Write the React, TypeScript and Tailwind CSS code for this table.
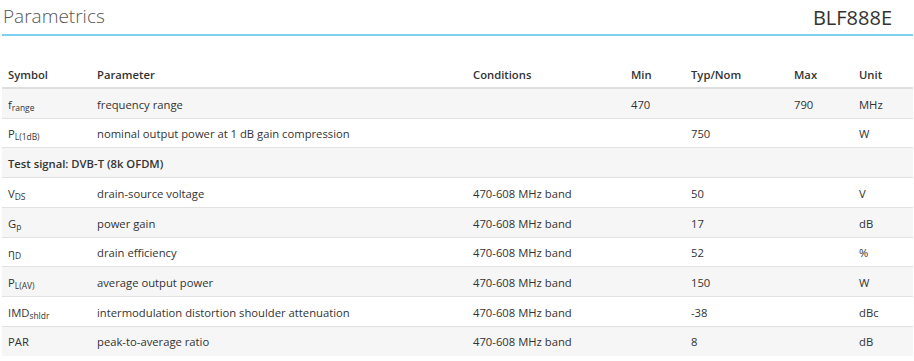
import React from "react";

type Row = {
  sym: React.ReactNode;
  param: string;
  cond?: string;
  min?: string;
  typ?: string;
  max?: string;
  unit?: string;
};

const S = ({ b, s }: { b: string; s: string }) => (
  <span>
    {b}
    <sub>{s}</sub>
  </span>
);

const rows1: Row[] = [
  { sym: <S b="f" s="range" />, param: "frequency range", min: "470", max: "790", unit: "MHz" },
  { sym: <S b="P" s="L(1dB)" />, param: "nominal output power at 1 dB gain compression", typ: "750", unit: "W" },
];

const rows2: Row[] = [
  { sym: <S b="V" s="DS" />, param: "drain-source voltage", cond: "470-608 MHz band", typ: "50", unit: "V" },
  { sym: <S b="G" s="p" />, param: "power gain", cond: "470-608 MHz band", typ: "17", unit: "dB" },
  { sym: <S b="η" s="D" />, param: "drain efficiency", cond: "470-608 MHz band", typ: "52", unit: "%" },
  { sym: <S b="P" s="L(AV)" />, param: "average output power", cond: "470-608 MHz band", typ: "150", unit: "W" },
  { sym: <S b="IMD" s="shldr" />, param: "intermodulation distortion shoulder attenuation", cond: "470-608 MHz band", typ: "-38", unit: "dBc" },
  { sym: "PAR", param: "peak-to-average ratio", cond: "470-608 MHz band", typ: "8", unit: "dB" },
];

const td = "pl-[6px] pt-[5.6px] pb-[3.15px] leading-[20px] border-t border-[#e2e2e2] whitespace-nowrap";
const th = "pl-[6px] pt-[6px] pb-[2px] leading-[20px] font-semibold text-left border-b-2 border-[#dedede]";

function DataRow({ r, gray }: { r: Row; gray: boolean }) {
  return (
    <tr className={gray ? "bg-[#f6f6f6]" : "bg-white"}>
      <td className={td}>{r.sym}</td>
      <td className={td}>{r.param}</td>
      <td className={td}>{r.cond ?? ""}</td>
      <td className={td}>{r.min ?? ""}</td>
      <td className={td}>{r.typ ?? ""}</td>
      <td className={td}>{r.max ?? ""}</td>
      <td className={td}>{r.unit ?? ""}</td>
    </tr>
  );
}

export default function App() {
  return (
    <div
      className="w-[914px] h-[361px] bg-white pl-[2px] pr-[1px] overflow-hidden text-[#333]"
      style={{ fontFamily: '"Open Sans", "Liberation Sans", sans-serif' }}
    >
      <div className="h-[36px] flex justify-between items-start border-b-2 border-[#7dd0ee]">
        <h2 className="text-[19px] leading-[30px] mt-[1px] font-light text-[#555] pl-[1px]">Parametrics</h2>
        <div className="text-[20px] leading-[28px] mt-[4px] mr-[21px] text-[#333]">BLF888E</div>
      </div>
      <table className="mt-[23px] w-[911px] table-fixed border-collapse text-[11.25px]">
        <colgroup>
          <col className="w-[89px]" />
          <col className="w-[376px]" />
          <col className="w-[158px]" />
          <col className="w-[60px]" />
          <col className="w-[103px]" />
          <col className="w-[65px]" />
          <col />
        </colgroup>
        <thead>
          <tr>
            <th className={th}>Symbol</th>
            <th className={th}>Parameter</th>
            <th className={th}>Conditions</th>
            <th className={th}>Min</th>
            <th className={th}>Typ/Nom</th>
            <th className={th}>Max</th>
            <th className={th}>Unit</th>
          </tr>
        </thead>
        <tbody>
          <DataRow r={rows1[0]} gray={true} />
          <DataRow r={rows1[1]} gray={false} />
          <tr className="bg-[#f6f6f6]">
            <td colSpan={7} className={td + " font-semibold"}>
              Test signal: DVB-T (8k OFDM)
            </td>
          </tr>
          {rows2.map((r, i) => (
            <DataRow key={i} r={r} gray={i % 2 === 1} />
          ))}
        </tbody>
      </table>
    </div>
  );
}
